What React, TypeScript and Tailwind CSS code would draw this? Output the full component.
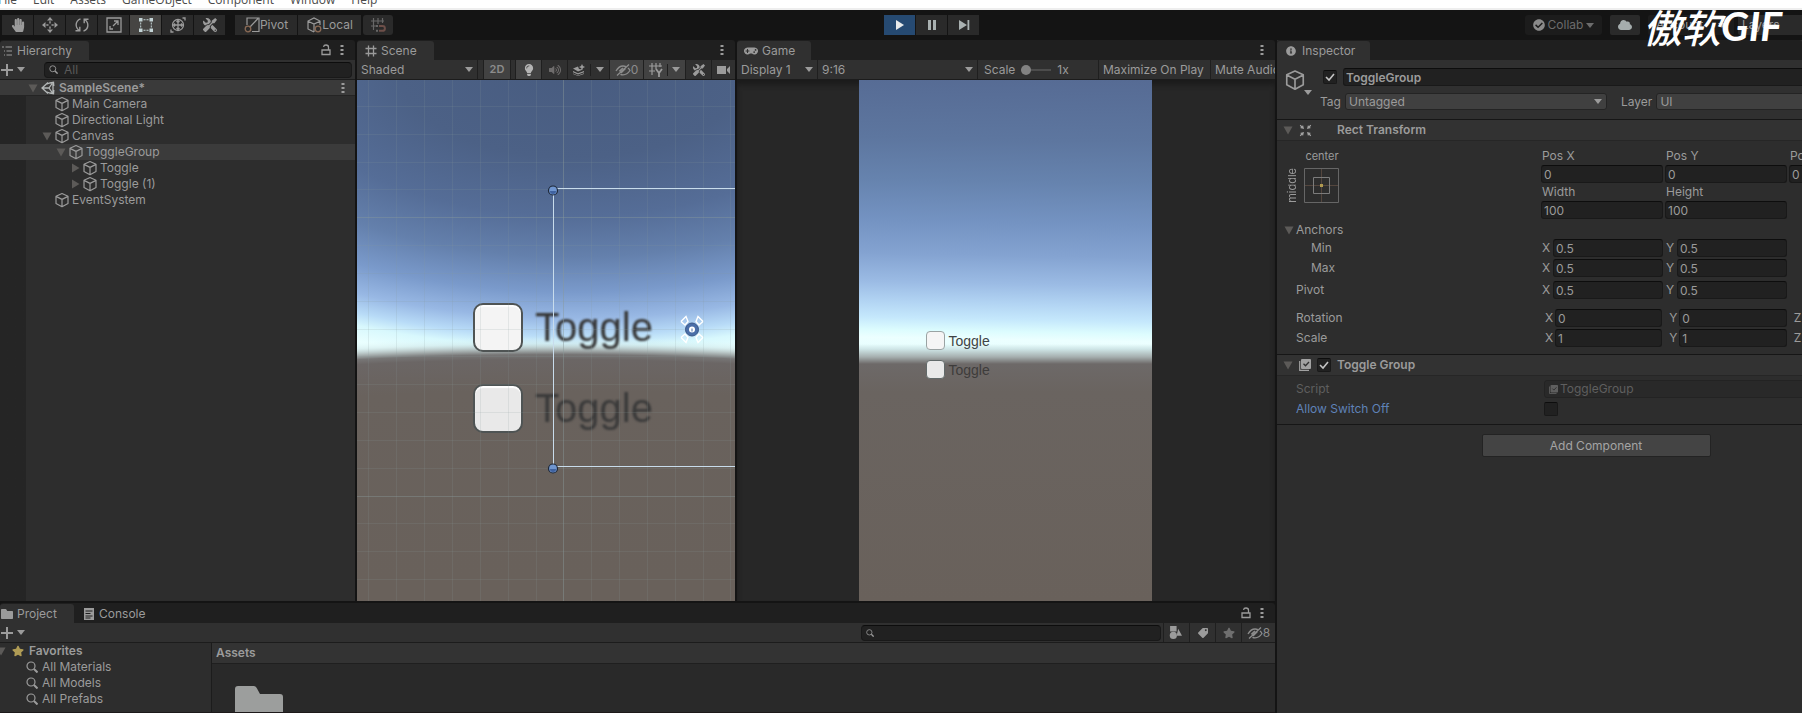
import type { ReactNode } from "react";
import clsx from "clsx";
import {
  FaCloud,
  FaHandPaper,
  FaInfoCircle,
  FaStar,
  FaTag,
  FaTools,
  FaVolumeUp,
  FaCheckCircle,
  FaGamepad,
  FaLightbulb,
} from "react-icons/fa";

const MENUS = ["File", "Edit", "Assets", "GameObject", "Component", "Window", "Help"];

/* ---------- Icons ---------- */

type IconProps = { className?: string };

function CaretDown({ className }: IconProps) {
  return (
    <svg viewBox="0 0 8 5" className={clsx("h-[5px] w-2 shrink-0", className)} fill="currentColor" aria-hidden="true">
      <path d="M0 0h8L4 5z" />
    </svg>
  );
}

function Fold({ open = true, className }: IconProps & { open?: boolean }) {
  return (
    <svg viewBox="0 0 10 10" className={clsx("size-[10px] shrink-0 text-[#5c5a58]", className)} fill="currentColor" aria-hidden="true">
      <path d={open ? "M0.5 1.5h9L5 9.5z" : "M2 0.5v9L9.5 5z"} />
    </svg>
  );
}

function Kebab({ className }: IconProps) {
  return (
    <svg viewBox="0 0 4 12" className={clsx("h-3 w-1 shrink-0", className)} fill="currentColor" aria-hidden="true">
      <path d="M0.5 1h3v2h-3zM0.5 5h3v2h-3zM0.5 9h3v2h-3z" />
    </svg>
  );
}

function Unlock() {
  return (
    <svg viewBox="0 0 10 12" className="h-3 w-[10px]" fill="none" stroke="currentColor" strokeWidth="1.3" aria-hidden="true">
      <path d="M1 6h8v4.5H1zM2.5 2.8C2.8 1.4 3.6 1 5 1c1.8 0 2.5 .9 2.5 2.2V6" />
    </svg>
  );
}

function Cube({ className }: IconProps) {
  return (
    <svg viewBox="0 0 16 16" className={clsx("shrink-0", className)} fill="none" stroke="currentColor" strokeWidth="1.2" strokeLinejoin="round" aria-hidden="true">
      <path d="M8 1.5l6 2.7v7.3L8 14.7 2 11.5V4.2zM2 4.4l6 3 6-3M8 7.4v7" />
    </svg>
  );
}

function UnityMark() {
  return (
    <svg viewBox="0 0 14 14" className="size-[14px] shrink-0 text-[#b4b8b8]" fill="none" stroke="currentColor" strokeWidth="1.3" aria-hidden="true">
      <path d="M7 1.5L1 7l6 5.5M4.5 3.5L9 2l3.5-.8L12.800 5M4.5 10.5L9 12l3.5.8.3-3.8M12 2.5v9M1.5 7H8M8 7l3.5-5M8 7l3.5 5" />
    </svg>
  );
}

function Search({ className }: IconProps) {
  return (
    <svg viewBox="0 0 12 12" className={clsx("shrink-0", className)} fill="none" stroke="currentColor" aria-hidden="true">
      <circle cx="5" cy="5" r="4" strokeWidth="1.2" />
      <path d="M8 8l3.5 3.5" strokeWidth="2" />
    </svg>
  );
}

function Plus() {
  return (
    <svg viewBox="0 0 12 12" className="size-3" stroke="currentColor" strokeWidth="2" aria-hidden="true">
      <path d="M6 0v12M0 6h12" />
    </svg>
  );
}

function EyeOff() {
  return (
    <svg viewBox="0 0 16 12" className="h-3 w-4" fill="none" stroke="currentColor" strokeWidth="1.3" aria-hidden="true">
      <path d="M1 7c2-3.5 4.5-5 7-5 1.2 0 2.2.3 3 .7M13 4c.8.7 1.5 1.5 2 2.5-2 3-4.5 4.3-7 4.3-1 0-1.8-.2-2.6-.5" />
      <path d="M2 11.5L14 .5M6 9l4.5-4.5" />
      <path d="M4.5 7.5L8 4.2" strokeWidth="1.8" />
    </svg>
  );
}

function GridIcon({ className }: IconProps) {
  return (
    <svg viewBox="0 0 12 12" className={clsx("size-3 shrink-0", className)} stroke="currentColor" strokeWidth="1.3" aria-hidden="true">
      <path d="M3.5 .5v11M8.5 .5v11M.5 3.5h11M.5 8.5h11" />
    </svg>
  );
}

function FolderShape({ className }: IconProps) {
  return (
    <svg viewBox="0 0 48 40" className={clsx("shrink-0", className)} fill="currentColor" aria-hidden="true">
      <path d="M0 3a3 3 0 013-3h15c2 0 3 .6 4 2.5L25 8h20a3 3 0 013 3v26a3 3 0 01-3 3H3a3 3 0 01-3-3z" />
    </svg>
  );
}

function MoveIcon() {
  return (
    <svg viewBox="0 0 16 16" className="size-4" fill="currentColor" aria-hidden="true">
      <path d="M8 0l3 3.5H5zM8 16l-3-3.5h6zM0 8l3.5-3v6zM16 8l-3.5 3V5z" />
      <path d="M7.3 4.3h1.4v2.2H7.3zM7.3 9.5h1.4v2.2H7.3zM4.3 7.3h2.2v1.4H4.3zM9.5 7.3h2.2v1.4H9.5z" />
    </svg>
  );
}

function RotateIcon() {
  return (
    <svg viewBox="0 0 16 16" className="size-4" fill="none" stroke="currentColor" strokeWidth="1.4" aria-hidden="true">
      <path d="M6.5 1.8C1 4 .8 10.5 5.5 13.5M1.5 13.8h4.3V9.8" />
      <path d="M9.5 14.2C15 12 15.2 5.5 10.5 2.5M14.5 2.2h-4.3v4" />
    </svg>
  );
}

function ScaleIcon() {
  return (
    <svg viewBox="0 0 16 16" className="size-4" fill="none" stroke="currentColor" strokeWidth="1.3" aria-hidden="true">
      <path d="M1 1h14v14H1zM8 4h4v4M12 4L7 9M4 9v3h3" />
    </svg>
  );
}

function RectIcon() {
  return (
    <svg viewBox="0 0 16 16" className="size-4 text-[#c3d4d6]" fill="currentColor" aria-hidden="true">
      <path d="M1 1h3.5v3.5H1zM11.5 1H15v3.5h-3.5zM1 11.5h3.5V15H1zM11.5 11.5H15V15h-3.5z" />
      <path d="M5.5 2.2h2v1h-2zM8.5 2.2h2v1h-2zM5.5 12.8h2v1h-2zM8.5 12.8h2v1h-2zM2.2 5.5h1v2h-1zM2.2 8.5h1v2h-1zM12.8 5.5h1v2h-1zM12.8 8.5h1v2h-1z" />
    </svg>
  );
}

function TransformIcon() {
  return (
    <svg viewBox="0 0 16 16" className="size-4" fill="none" stroke="currentColor" strokeWidth="1.3" aria-hidden="true">
      <circle cx="8" cy="8" r="5.5" />
      <path d="M8 3.5v9M3.5 8h9M6.5 5L8 3.5 9.5 5M6.5 11L8 12.5 9.5 11M5 6.5L3.5 8 5 9.5M11 6.5L12.5 8 11 9.5M12.5 1H15v2.5M1 12.5V15h2.5" />
    </svg>
  );
}

function PivotIcon() {
  return (
    <svg viewBox="0 0 16 16" className="size-4" fill="none" stroke="currentColor" aria-hidden="true">
      <path d="M3 8V1h12v13.5H8M6 10l8-8.5" strokeWidth="1.2" />
      <circle cx="4" cy="12" r="2.8" stroke="#8a6a55" strokeWidth="1.3" />
    </svg>
  );
}

function LocalIcon() {
  return (
    <svg viewBox="0 0 16 16" className="size-4" fill="none" stroke="currentColor" aria-hidden="true">
      <path d="M8 15l-6-3V4l6-3 6 3v4M2 4.3l6 2.7 6-2.7M8 7v8" strokeWidth="1.2" />
      <circle cx="12" cy="12" r="2.8" stroke="#8a6a55" strokeWidth="1.3" />
    </svg>
  );
}

function SnapIcon() {
  return (
    <svg viewBox="0 0 16 16" className="size-4 text-[#686868]" fill="none" stroke="currentColor" strokeWidth="1.2" aria-hidden="true">
      <path d="M3.5 1v12M8 1v6M12.5 1v5M1 4h13M1 9h5" />
      <path d="M9 9h3.5a2.3 2.3 0 010 4.8H9" stroke="#6d4f49" strokeWidth="2" />
      <path d="M6 9h2M6 13.8h2" strokeWidth="2" />
    </svg>
  );
}

function ScriptIcon({ className }: IconProps) {
  return (
    <svg viewBox="0 0 12 12" className={clsx("shrink-0", className)} aria-hidden="true">
      <path d="M.7 2v9.3H10" fill="none" stroke="currentColor" strokeWidth="1.2" />
      <rect x="2" y="0" width="10" height="10" rx="1" fill="currentColor" />
      <path d="M4.5 4.8l2 2L10 3" fill="none" stroke="#303030" strokeWidth="1.3" />
    </svg>
  );
}

/* Screwdriver crossed with an open-ended wrench */
function ToolsIcon({ className }: IconProps) {
  return <FaTools className={clsx("-scale-x-100", className)} aria-hidden="true" />;
}

/* ---------- Shared parts ---------- */

function ToolButton({ label, active, className, children }: { label: string; active?: boolean; className?: string; children: ReactNode }) {
  return (
    <button
      type="button"
      aria-label={label}
      className={clsx("flex h-5 items-center justify-center", active ? "bg-[#464543]" : "bg-[#2a2a2a]", className)}
    >
      {children}
    </button>
  );
}

function TabBar({ children, actions }: { children: ReactNode; actions?: ReactNode }) {
  return (
    <div className="flex h-5 shrink-0 justify-between rounded-t-[3px] bg-[#1f1f1f]">
      <div className="flex pt-px">{children}</div>
      <div className="flex items-center gap-[9px] pr-[11px]">{actions}</div>
    </div>
  );
}

function Tab({ active, className, children }: { active?: boolean; className?: string; children: ReactNode }) {
  return (
    <button
      type="button"
      className={clsx("flex items-center whitespace-nowrap rounded-t-[3px] leading-4", active && "bg-[#303030]", className)}
    >
      {children}
    </button>
  );
}

function Strip({ className, children }: { className?: string; children: ReactNode }) {
  return (
    <div className={clsx("flex h-5 shrink-0 items-stretch overflow-hidden border-b border-[#1c1c1c] bg-[#303030] whitespace-nowrap", className)}>
      {children}
    </div>
  );
}

function StripSelect({ label, value, className }: { label: string; value: string; className?: string }) {
  return (
    <div className={clsx("relative flex shrink-0 items-center border-r border-[#1f1f1f]", className)}>
      <select aria-label={label} className="h-full w-full appearance-none bg-transparent px-1 leading-4 outline-none">
        <option>{value}</option>
      </select>
      <CaretDown className="pointer-events-none absolute right-1" />
    </div>
  );
}

/* ---------- Top toolbar ---------- */

function MainToolbar() {
  return (
    <header className="relative flex h-[30px] shrink-0 items-center bg-[#141414] pl-[2px]">
      <div className="flex gap-px">
        <ToolButton label="Hand" className="w-[31px]"><FaHandPaper className="size-[14px]" /></ToolButton>
        <ToolButton label="Move" className="w-[31px]"><MoveIcon /></ToolButton>
        <ToolButton label="Rotate" className="w-[31px]"><RotateIcon /></ToolButton>
        <ToolButton label="Scale" className="w-[31px]"><ScaleIcon /></ToolButton>
        <ToolButton label="Rect" active className="w-[31px]"><RectIcon /></ToolButton>
        <ToolButton label="Transform" className="w-[31px]"><TransformIcon /></ToolButton>
        <ToolButton label="Custom tools" className="w-[31px]"><ToolsIcon className="size-[14px]" /></ToolButton>
      </div>
      <div className="ml-[10px] flex gap-px">
        <ToolButton label="Pivot" className="w-[62px]"><PivotIcon />Pivot</ToolButton>
        <ToolButton label="Local" className="w-[63px]"><LocalIcon />Local</ToolButton>
        <ToolButton label="Grid snapping" className="ml-px w-[30px] rounded-[3px] bg-[#1c1c1c]"><SnapIcon /></ToolButton>
      </div>
      <div className="flex-[9]" />
      <div className="flex gap-px">
        <button type="button" aria-label="Play" className="flex h-5 w-[31px] items-center justify-center bg-[#264a72] text-[#e8eaea]">
          <svg viewBox="0 0 10 10" className="size-[10px]" fill="currentColor"><path d="M1 0l8 5-8 5z" /></svg>
        </button>
        <ToolButton label="Pause" className="w-[31px] text-[#a9b1b1]">
          <svg viewBox="0 0 10 10" className="size-[10px]" fill="currentColor"><path d="M1 0h3v10H1zM6 0h3v10H6z" /></svg>
        </ToolButton>
        <ToolButton label="Step" className="w-[31px] text-[#a9b1b1]">
          <svg viewBox="0 0 12 10" className="h-[10px] w-3" fill="currentColor"><path d="M1 0l8 5-8 5zM9.5 0h1.8v10H9.5z" /></svg>
        </ToolButton>
      </div>
      <div className="flex-[10]" />
      <div className="flex gap-2">
        <button type="button" className="flex h-5 w-[77px] items-center justify-center gap-[3px] rounded-[3px] bg-[#1c1c1c] text-[#6c6c6c]">
          <FaCheckCircle className="size-3 text-[#8a8a8a]" />
          Collab
          <CaretDown />
        </button>
        <ToolButton label="Services" className="w-[30px] rounded-[2px]"><FaCloud className="size-[14px] text-[#a5adad]" /></ToolButton>
        <button type="button" className="flex h-5 w-[86px] items-center justify-between rounded-[2px] bg-[#1c1c1c] pr-2 pl-2">
          Account
          <CaretDown />
        </button>
        <button type="button" className="-ml-1 flex h-5 w-[64px] items-center rounded-l-[2px] bg-[#2a2a2a] pl-1">Layers</button>
      </div>
      <div className="pointer-events-none absolute top-0 right-5 z-10 flex items-center leading-8 font-bold whitespace-nowrap text-white italic">
        <span className="font-['Noto_Sans_CJK_SC',sans-serif] text-[39px] font-medium">傲软</span>
        <span className="font-['Lato',sans-serif] text-[41px]">GIF</span>
      </div>
    </header>
  );
}

/* ---------- Hierarchy ---------- */

type Node = { name: string; indent: string; fold?: "open" | "closed"; selected?: boolean };

const NODES: Node[] = [
  { name: "Main Camera", indent: "pl-[42px]" },
  { name: "Directional Light", indent: "pl-[42px]" },
  { name: "Canvas", indent: "pl-[42px]", fold: "open" },
  { name: "ToggleGroup", indent: "pl-[56px]", fold: "open", selected: true },
  { name: "Toggle", indent: "pl-[70px]", fold: "closed" },
  { name: "Toggle (1)", indent: "pl-[70px]", fold: "closed" },
  { name: "EventSystem", indent: "pl-[42px]" },
];

function Hierarchy() {
  return (
    <section className="flex w-[355px] shrink-0 flex-col">
      <TabBar actions={<><Unlock /><Kebab /></>}>
        <Tab active className="w-[89px] gap-[5px] pl-[2px]">
          <svg viewBox="0 0 10 10" className="size-[10px]" stroke="currentColor" strokeWidth="1.2" aria-hidden="true">
            <path d="M0 1h2M3.5 1h6.5M2 5h1M4.5 5H10M2 9h1M4.5 9H10" />
          </svg>
          Hierarchy
        </Tab>
      </TabBar>
      <Strip className="items-center! pr-[3px] pl-px">
        <button type="button" aria-label="Create" className="flex items-center gap-1"><Plus /><CaretDown /></button>
        <label className="ml-[19px] flex h-4 flex-1 items-center gap-[6px] rounded-[4px] border border-[#191919] border-t-[#0d0d0d] bg-[#212121] pl-1">
          <Search className="size-[9px]" />
          <input aria-label="Search hierarchy" placeholder="All" className="w-full bg-transparent leading-[14px] outline-none placeholder:text-[#5a5a5a]" />
        </label>
      </Strip>
      <div className="flex-1 bg-linear-to-r from-[#252525] from-[26px] to-[#2d2d2d] to-[26px]">
        <div className="flex h-4 items-center border-b border-[#242424] bg-[#3a3a3a] pr-[10px] pl-[28px] font-semibold">
          <Fold className="mr-[3px]" />
          <UnityMark />
          <span className="ml-1 flex-1 leading-4">SampleScene*</span>
          <Kebab />
        </div>
        {NODES.map((node) => (
          <div key={node.name} className={clsx("flex h-4 items-center leading-4", node.indent, node.selected && "bg-[#3b3b3b]")}>
            <span className="mr-[2px] w-[10px]">{node.fold && <Fold open={node.fold === "open"} />}</span>
            <Cube className="mr-[2px] size-4" />
            {node.name}
          </div>
        ))}
      </div>
    </section>
  );
}

/* ---------- Scene view ---------- */

const GRID_X = [11, 39, 67, 95, 123, 151, 179, 206, 234, 262, 290, 318, 346, 373];
const GRID_Y = [26, 54, 82, 109, 137, 165, 193, 221, 249, 276, 304, 332, 360, 388, 416, 443, 471, 499];

function SceneBackdrop() {
  return (
    <svg viewBox="0 0 378 521" preserveAspectRatio="xMidYMid slice" className="absolute inset-0 h-full w-full" aria-hidden="true">
      <defs>
        <radialGradient id="sky" gradientUnits="userSpaceOnUse" cx="0" cy="0" r="1" gradientTransform="translate(215 -10) scale(580 292)">
          <stop offset="0" stopColor="#485c80" />
          <stop offset="0.3" stopColor="#4c6186" />
          <stop offset="0.5" stopColor="#556d97" />
          <stop offset="0.64" stopColor="#6480ac" />
          <stop offset="0.76" stopColor="#7a9acb" />
          <stop offset="0.85" stopColor="#98b8e4" />
          <stop offset="0.91" stopColor="#b8dbf7" />
          <stop offset="0.95" stopColor="#d8f8fd" />
          <stop offset="1" stopColor="#eaffff" />
        </radialGradient>
        <radialGradient id="ground" gradientUnits="userSpaceOnUse" cx="195" cy="3877" r="3620">
          <stop offset="0.934" stopColor="#69615b" />
          <stop offset="0.985" stopColor="#69625d" />
          <stop offset="0.9938" stopColor="#6b6665" />
          <stop offset="0.9952" stopColor="#777676" />
          <stop offset="0.9966" stopColor="#a9b3b3" stopOpacity="0.9" />
          <stop offset="0.9982" stopColor="#cfe5e6" stopOpacity="0.5" />
          <stop offset="1" stopColor="#dff8f8" stopOpacity="0" />
        </radialGradient>
      </defs>
      <rect width="378" height="521" fill="url(#sky)" />
      <rect width="378" height="521" fill="url(#ground)" />
    </svg>
  );
}

/* Grid lines, selection rectangle with its handles and the light gizmo */
function SceneOverlay() {
  return (
    <svg viewBox="0 0 378 521" preserveAspectRatio="xMidYMid slice" className="pointer-events-none absolute inset-0 h-full w-full" aria-hidden="true">
      {GRID_X.map((x) => (
        <path key={x} d={`M${x + 0.5} 0V521`} stroke="#8a9a9a" strokeOpacity={x === 206 ? 0.45 : 0.16} />
      ))}
      {GRID_Y.map((y) => (
        <path key={y} d={`M0 ${y + 0.5}H378`} stroke="#8a9a9a" strokeOpacity={y === 137 || y === 416 ? 0.4 : 0.16} />
      ))}
      <path d="M378 108.5H196.5V386.5H378" fill="none" stroke="#c8dcec" />
      {[110, 388].map((y) => (
        <g key={y}>
          <circle cx="196" cy={y + 0.5} r="4.5" fill="#6f95cf" stroke="#1e2838" strokeWidth="1.2" />
          <path d={`M193 ${y + 1}h6a3 3 0 01-6 0z`} fill="#3f62a0" />
        </g>
      ))}
      <g transform="translate(335 249.5)">
        {["scale(1 1)", "scale(-1 1)", "scale(1 -1)", "scale(-1 -1)"].map((flip) => (
          <path key={flip} transform={flip} d="M-11 -8L-6 -13L-4 -8L-7 -4.5L-11 -8" fill="none" stroke="#ffffff" strokeWidth="1.4" />
        ))}
        <circle r="6.5" fill="#4a6ea8" stroke="#3a5686" />
        <circle r="3" fill="#ffffff" />
        <path d="M0 -1V2" stroke="#4a6ea8" />
      </g>
    </svg>
  );
}

function SceneToggle({ className, faded }: { className: string; faded?: boolean }) {
  return (
    <label className={clsx("absolute left-[116px] flex items-center gap-3", className)}>
      <input
        type="checkbox"
        className={clsx(
          "h-[49px] w-[50px] appearance-none rounded-[10px] border-2 border-[#4f5454] shadow-[inset_0_2px_1px_#ffffff]",
          faded ? "bg-[#e9e9e9]" : "bg-[#f4f4f4]",
        )}
      />
      <span className={clsx("font-['Liberation_Sans',Arial,sans-serif] text-[40px] leading-[49px] blur-[1px]", faded ? "text-[#3a3a3a]" : "text-[#363636]")}>
        Toggle
      </span>
    </label>
  );
}

function Scene() {
  return (
    <section className="flex w-[378px] shrink-0 flex-col">
      <TabBar actions={<Kebab />}>
        <Tab active className="w-[77px] gap-1 pl-2"><GridIcon />Scene</Tab>
      </TabBar>
      <Strip>
        <StripSelect label="Draw mode" value="Shaded" className="w-[121px]" />
        <span className="w-[6px] border-r border-[#1f1f1f]" />
        <button type="button" className="w-[26px] bg-[#424242] text-[11px] font-semibold text-[#8c8c8c]">2D</button>
        <span className="w-[6px] border-x border-[#1f1f1f]" />
        <button type="button" aria-label="Lighting" className="flex w-[26px] items-center justify-center border-r border-[#1f1f1f] bg-[#424242]"><FaLightbulb className="size-3 text-[#b4b4b4]" /></button>
        <button type="button" aria-label="Audio" className="flex w-[26px] items-center justify-center border-r border-[#1f1f1f] text-[#6e6c6c]"><FaVolumeUp className="size-3" /></button>
        <button type="button" aria-label="Effects" className="flex w-[42px] items-center justify-between border-r border-[#1f1f1f] px-[5px]">
          <svg viewBox="0 0 12 12" className="size-3" fill="currentColor" aria-hidden="true">
            <path d="M0 4.5l5-2 1 2.5 4 .5-5 2zM0 7l5 2.2L11 7v1.3L5 10.5 0 8.3zM0 9.5L5 11.5l6-2.2V10l-6 2-5-2zM9 0l1 2 2 1-2 1-1 2-1-2-2-1 2-1z" />
          </svg>
          <span className="h-3 w-px bg-[#1f1f1f]" />
          <CaretDown />
        </button>
        <button type="button" className="flex w-[34px] items-center justify-center border-r border-[#1f1f1f] bg-[#424242] text-[#8c8c8c]"><EyeOff />0</button>
        <button type="button" aria-label="Grid axis" className="flex w-[42px] items-center justify-between border-r border-[#1f1f1f] bg-[#424242] px-[5px]">
          <svg viewBox="0 0 14 14" className="size-[14px]" fill="none" stroke="currentColor" strokeWidth="1.2" aria-hidden="true">
            <path d="M3 0v12M7 0v6M11 0v4M0 3h13M0 8h6" />
            <path d="M7 6l3 4 3-4M10 10v4" strokeWidth="1.8" />
          </svg>
          <span className="h-3 w-px bg-[#1f1f1f]" />
          <CaretDown />
        </button>
        <button type="button" aria-label="Component tools" className="flex w-[26px] items-center justify-center border-r border-[#1f1f1f]"><ToolsIcon className="size-3" /></button>
        <button type="button" aria-label="Scene camera" className="flex flex-1 items-center justify-center">
          <svg viewBox="0 0 14 10" className="h-[10px] w-[14px]" fill="currentColor" aria-hidden="true"><path d="M0 1h9v8H0zM10 4l3-3v8l-3-3z" /></svg>
        </button>
      </Strip>
      <div className="relative flex-1 overflow-hidden">
        <SceneBackdrop />
        <SceneToggle className="top-[223px]" />
        <SceneToggle className="top-[304px]" faded />
        <SceneOverlay />
      </div>
    </section>
  );
}

/* ---------- Game view ---------- */

function GameToggle({ faded }: { faded?: boolean }) {
  return (
    <label className="flex items-center gap-1">
      <input
        type="checkbox"
        className={clsx(
          "size-[19px] appearance-none rounded-[4px] border",
          faded ? "border-[#626a6a] bg-[#e9e9e9]" : "border-[#9aa3a3] bg-[#f5f5f5]",
        )}
      />
      <span className={clsx("font-['Liberation_Sans',Arial,sans-serif] text-sm leading-4", faded ? "text-[#3e3c3b]" : "text-[#404444]")}>Toggle</span>
    </label>
  );
}

function Game() {
  return (
    <section className="flex min-w-0 flex-1 flex-col">
      <TabBar actions={<Kebab />}>
        <Tab active className="w-[74px] gap-1 pl-[7px]"><FaGamepad className="size-[14px]" />Game</Tab>
      </TabBar>
      <Strip>
        <StripSelect label="Display" value="Display 1" className="w-[81px]" />
        <StripSelect label="Aspect" value="9:16" className="w-[160px]" />
        <label className="flex w-[121px] shrink-0 items-center border-r border-[#1f1f1f] pl-[6px]">
          Scale
          <input
            type="range"
            min={1}
            max={5}
            defaultValue={1}
            className="mx-[6px] h-[2px] w-[30px] appearance-none bg-[#4c4c4c] [&::-webkit-slider-thumb]:size-[10px] [&::-webkit-slider-thumb]:appearance-none [&::-webkit-slider-thumb]:rounded-full [&::-webkit-slider-thumb]:bg-[#828282]"
          />
          1x
        </label>
        <button type="button" className="w-[112px] shrink-0 border-r border-[#1f1f1f] pl-1 text-left">Maximize On Play</button>
        <button type="button" className="shrink-0 pl-1">Mute Audio</button>
      </Strip>
      <div className="flex flex-1 justify-center bg-[#272727] pr-[2px] shadow-[inset_0_5px_5px_#1c1c1c]">
        <div className="flex w-[293px] bg-[linear-gradient(181deg,#566b94_0px,#5d769f_62px,#6683ae_104px,#7493c2_145px,#84a3d1_178px,#9bbbe4_206px,#b2d4f3_226px,#c5e8fc_242px,#dcfcfe_254px,#ecffff_262px,#e0fcfc_290px)]">
          <div className="flex flex-1 flex-col gap-[10px] bg-[linear-gradient(180deg,transparent_264px,#cfe6e7_269px,#a5aeae_277px,#6d6968_284px,#6a6460_312px,#69615b_521px)] pt-[251px] pl-[67px]">
            <GameToggle />
            <GameToggle faded />
          </div>
        </div>
      </div>
    </section>
  );
}

/* ---------- Project ---------- */

function Project() {
  return (
    <section className="flex h-[110px] shrink-0 flex-col border-b border-[#1d191a]">
      <TabBar actions={<><Unlock /><Kebab /></>}>
        <Tab active className="w-[74px] gap-1 pl-px"><FolderShape className="h-[10px] w-3" />Project</Tab>
        <Tab className="gap-[5px] pl-[10px]">
          <svg viewBox="0 0 10 12" className="h-3 w-[10px]" aria-hidden="true">
            <path d="M0 0h10v12H0z" fill="currentColor" />
            <path d="M1.5 3h7M1.5 5.5h5M1.5 8h7M1.5 10h5" stroke="#1f1f1f" />
          </svg>
          Console
        </Tab>
      </TabBar>
      <Strip className="justify-between pl-px">
        <button type="button" aria-label="Create asset" className="flex items-center gap-1"><Plus /><CaretDown /></button>
        <div className="flex">
          <label className="mr-[2px] flex h-4 w-[300px] items-center gap-1 self-center rounded-[4px] border border-[#191919] border-t-[#0d0d0d] bg-[#212121] pl-1">
            <Search className="size-2" />
            <input aria-label="Search project" className="w-full bg-transparent leading-[14px] outline-none" />
          </label>
          <button type="button" aria-label="Search by type" className="flex w-[26px] items-center border-l border-[#1f1f1f] pl-[5px]">
            <svg viewBox="0 0 12 12" className="size-[13px]" fill="currentColor" aria-hidden="true">
              <path d="M1 0h6v5H1zM8.5 2.5L12 9H7z" />
              <circle cx="4" cy="8.7" r="3.3" />
            </svg>
          </button>
          <button type="button" aria-label="Search by label" className="flex w-[26px] items-center justify-center border-l border-[#1f1f1f]"><FaTag className="size-[10px] -scale-x-100" /></button>
          <button type="button" aria-label="Save search" className="flex w-[26px] items-center justify-center border-l border-[#1f1f1f] text-[#6f6f6f]"><FaStar className="size-3" /></button>
          <button type="button" className="flex w-[34px] items-center justify-center border-l border-[#1f1f1f] text-[#8c8c8c]"><EyeOff />8</button>
        </div>
      </Strip>
      <div className="flex flex-1 overflow-hidden">
        <ul className="w-[211px] shrink-0 bg-[#2d2d2d] leading-4">
          <li className="flex h-4 items-center font-semibold">
            <Fold className="-ml-1" />
            <FaStar className="mr-[5px] ml-[6px] size-3 text-[#b09c55]" />
            Favorites
          </li>
          {["All Materials", "All Models", "All Prefabs"].map((name) => (
            <li key={name} className="flex h-4 items-center gap-1 pl-[26px]"><Search className="size-3" />{name}</li>
          ))}
        </ul>
        <div className="flex-1 border-l border-[#1c1c1c] bg-[#292929]">
          <div className="h-[21px] border-b border-[#1f1f1f] bg-[#333333] pl-1 leading-5 font-semibold">Assets</div>
          <FolderShape className="mt-[22px] ml-[23px] h-10 w-12 text-[#9c9e9d]" />
        </div>
      </div>
    </section>
  );
}

/* ---------- Inspector ---------- */

function NumberField({ label, axis, value, narrow }: { label: string; axis?: string; value: string; narrow?: boolean }) {
  return (
    <label className="flex min-w-0 flex-1 items-center">
      {axis && <span className={clsx("shrink-0 pl-px", narrow ? "w-[11px]" : "w-3")}>{axis}</span>}
      <input
        aria-label={label}
        defaultValue={value}
        className="h-[18px] w-full min-w-0 rounded-[3px] border border-[#191919] border-t-[#0d0d0d] bg-[#212121] px-[2px] leading-4 outline-none"
      />
    </label>
  );
}

function StackedField({ label, value }: { label: string; value: string }) {
  return (
    <label className="flex min-w-0 flex-1 flex-col">
      <span className="h-[18px] pl-px leading-[18px]">{label}</span>
      <input
        defaultValue={value}
        className="h-[18px] w-full rounded-[3px] border border-[#191919] border-t-[#0d0d0d] bg-[#212121] px-[2px] leading-4 outline-none"
      />
    </label>
  );
}

function AnchorRow({ name, value, indent }: { name: string; value: string; indent?: boolean }) {
  return (
    <div className="flex items-center gap-[2px]">
      <span className={clsx("w-[262px] shrink-0", indent ? "pl-[34px]" : "pl-[19px]")}>{name}</span>
      <NumberField label={`${name} X`} axis="X" value={value} />
      <NumberField label={`${name} Y`} axis="Y" value={value} />
      <span className="flex-1" />
    </div>
  );
}

function VectorRow({ name, value }: { name: string; value: string }) {
  return (
    <div className="flex items-center gap-[6px]">
      <span className="w-[261px] shrink-0 pl-[19px]">{name}</span>
      <NumberField label={`${name} X`} axis="X" value={value} narrow />
      <NumberField label={`${name} Y`} axis="Y" value={value} narrow />
      <NumberField label={`${name} Z`} axis="Z" value={value} narrow />
    </div>
  );
}

function CheckBox({ label, checked, id }: { label?: string; checked?: boolean; id?: string }) {
  return (
    <span className="relative flex size-[14px] shrink-0">
      <input
        type="checkbox"
        id={id}
        aria-label={label}
        defaultChecked={checked}
        className="peer size-[14px] appearance-none rounded-[2px] border border-[#191919] border-t-[#0d0d0d] bg-[#212121]"
      />
      <svg viewBox="0 0 14 14" className="pointer-events-none absolute inset-0 hidden text-[#c4c4c4] peer-checked:block" fill="none" stroke="currentColor" strokeWidth="1.6" aria-hidden="true">
        <path d="M3 7l3 3 5-6" />
      </svg>
    </span>
  );
}

function InspectorSelect({ label, value, className }: { label: string; value: string; className?: string }) {
  return (
    <label className={clsx("flex items-center gap-1", className)}>
      {label}
      <span className="relative flex flex-1 items-center">
        <select className="h-[17px] w-full appearance-none rounded-[3px] border border-[#242424] bg-[#404040] px-[3px] leading-[15px] outline-none">
          <option>{value}</option>
        </select>
        <CaretDown className="pointer-events-none absolute right-[5px]" />
      </span>
    </label>
  );
}

function Inspector() {
  return (
    <section className="flex w-[525px] shrink-0 flex-col overflow-hidden bg-[#2d2d2d]">
      <TabBar>
        <Tab active className="w-[93px] gap-[6px] pl-[9px]"><FaInfoCircle className="size-[10px]" />Inspector</Tab>
      </TabBar>
      <div className="min-w-[638px]">
        {/* Object header */}
        <div className="flex h-[59px] bg-[#303030] pt-2 pr-1 pl-[7px]">
          <div className="flex w-9 pt-px">
            <Cube className="size-[22px]" />
            <CaretDown className="mt-[21px] -ml-[2px]" />
          </div>
          <div className="flex flex-1 flex-col gap-[7px]">
            <div className="flex items-center gap-[6px] pl-[3px]">
              <CheckBox label="Active" checked />
              <input
                aria-label="Name"
                defaultValue="ToggleGroup"
                className="h-[18px] flex-1 rounded-[3px] border border-[#191919] border-t-[#0d0d0d] bg-[#212121] px-[2px] leading-4 font-semibold outline-none"
              />
            </div>
            <div className="flex gap-[14px]">
              <InspectorSelect label="Tag" value="Untagged" className="w-[287px]" />
              <InspectorSelect label="Layer" value="UI" className="flex-1" />
            </div>
          </div>
        </div>

        {/* Rect Transform */}
        <div className="flex h-[22px] items-center border-t border-b border-t-[#161616] border-b-[#262626] bg-[#323232] pl-[6px] font-semibold">
          <Fold />
          <svg viewBox="0 0 13 13" className="mr-[25px] ml-[6px] size-[13px] text-[#a2a2a2]" fill="currentColor" aria-hidden="true">
            <path d="M5 5L4 1 3.2 2.2 1.5.8.8 1.5 2.2 3.2 1 4zM8 5l1-4 .8 1.2L11.5.8l.7.7-1.4 1.7L12 4zM5 8l-1 4-.8-1.2-1.7 1.4-.7-.7 1.4-1.7L1 9zM8 8l1 4 .8-1.2 1.7 1.4.7-.7-1.4-1.7L12 9z" />
          </svg>
          Rect Transform
        </div>
        <div className="pt-[6px] pr-1">
          <div className="flex h-[74px]">
            <div className="w-[264px] shrink-0 pt-px pl-2">
              <div className="w-[70px] pl-1 text-center text-[11px] leading-4">center</div>
              <div className="mt-1 flex items-center gap-[5px]">
                <span className="w-[14px] rotate-180 text-center text-[11px] leading-[14px] [writing-mode:vertical-rl]">middle</span>
                <svg viewBox="0 0 35 35" className="size-[35px]" fill="none" aria-hidden="true">
                  <path d="M17.5 0v35M0 17.5h35" stroke="#54463e" />
                  <path d="M.5 .5h34v34H.5z" stroke="#666666" />
                  <path d="M9.5 9.5h16v16h-16z" stroke="#7c7c7c" />
                  <path d="M16 16h3v3h-3z" fill="#b09a50" />
                </svg>
              </div>
            </div>
            <div className="flex flex-1 flex-col">
              <div className="flex gap-[2px]">
                <StackedField label="Pos X" value="0" />
                <StackedField label="Pos Y" value="0" />
                <StackedField label="Pos Z" value="0" />
              </div>
              <div className="flex gap-[2px]">
                <StackedField label="Width" value="100" />
                <StackedField label="Height" value="100" />
                <span className="flex-1" />
              </div>
            </div>
          </div>
          <div className="flex h-[18px] items-center gap-[2px] pl-[7px]"><Fold />Anchors</div>
          <div className="flex flex-col gap-[2px]">
            <AnchorRow name="Min" value="0.5" indent />
            <AnchorRow name="Max" value="0.5" indent />
          </div>
          <div className="mt-1"><AnchorRow name="Pivot" value="0.5" /></div>
          <div className="mt-[10px] flex flex-col gap-[2px] pb-[7px]">
            <VectorRow name="Rotation" value="0" />
            <VectorRow name="Scale" value="1" />
          </div>
        </div>

        {/* Toggle Group */}
        <div className="flex h-[22px] items-center border-t border-b border-t-[#161616] border-b-[#262626] bg-[#323232] pl-[6px] font-semibold">
          <Fold />
          <ScriptIcon className="mr-[6px] ml-[6px] size-3 text-[#a2a2a2]" />
          <CheckBox label="Enabled" checked />
          <span className="pl-[6px]">Toggle Group</span>
        </div>
        <div className="border-b border-[#161616] pt-[3px] pr-1 pb-[5px] pl-[19px]">
          <div className="flex h-5 items-center text-[#5f5f5f]">
            <span className="w-[248px]">Script</span>
            <span className="flex h-[18px] flex-1 items-center gap-[2px] rounded-[3px] border border-[#232323] bg-[#292929] pl-1">
              <ScriptIcon className="size-[9px]" />
              ToggleGroup
            </span>
          </div>
          <div className="flex h-5 items-center">
            <label htmlFor="allow-off" className="w-[248px] text-[#5f82b8]">Allow Switch Off</label>
            <CheckBox id="allow-off" />
          </div>
        </div>
        <div className="flex justify-center pt-[9px]">
          <button type="button" className="h-[23px] w-[229px] rounded-[2px] border border-[#232323] bg-[#444444] text-[#a4a4a4]">Add Component</button>
        </div>
      </div>
    </section>
  );
}

export default function App() {
  return (
    <div className="flex h-screen flex-col overflow-hidden bg-[#141414] font-['Inter',sans-serif] text-xs text-[#9b9b9b]">
      <nav className="flex h-[10px] shrink-0 items-end overflow-hidden border-b-2 border-[#eeeeee] bg-white font-['Open_Sans',sans-serif] leading-4 text-[#4a4a4a]">
        <div className="-ml-[2px] flex gap-4">
          {MENUS.map((menu) => (
            <button key={menu} type="button">{menu}</button>
          ))}
        </div>
      </nav>
      <MainToolbar />
      <main className="flex min-h-0 flex-1 gap-[2px]">
        <div className="flex min-w-0 flex-1 flex-col gap-[2px]">
          <div className="flex min-h-0 flex-1 gap-[2px]">
            <Hierarchy />
            <Scene />
            <Game />
          </div>
          <Project />
        </div>
        <Inspector />
      </main>
    </div>
  );
}
